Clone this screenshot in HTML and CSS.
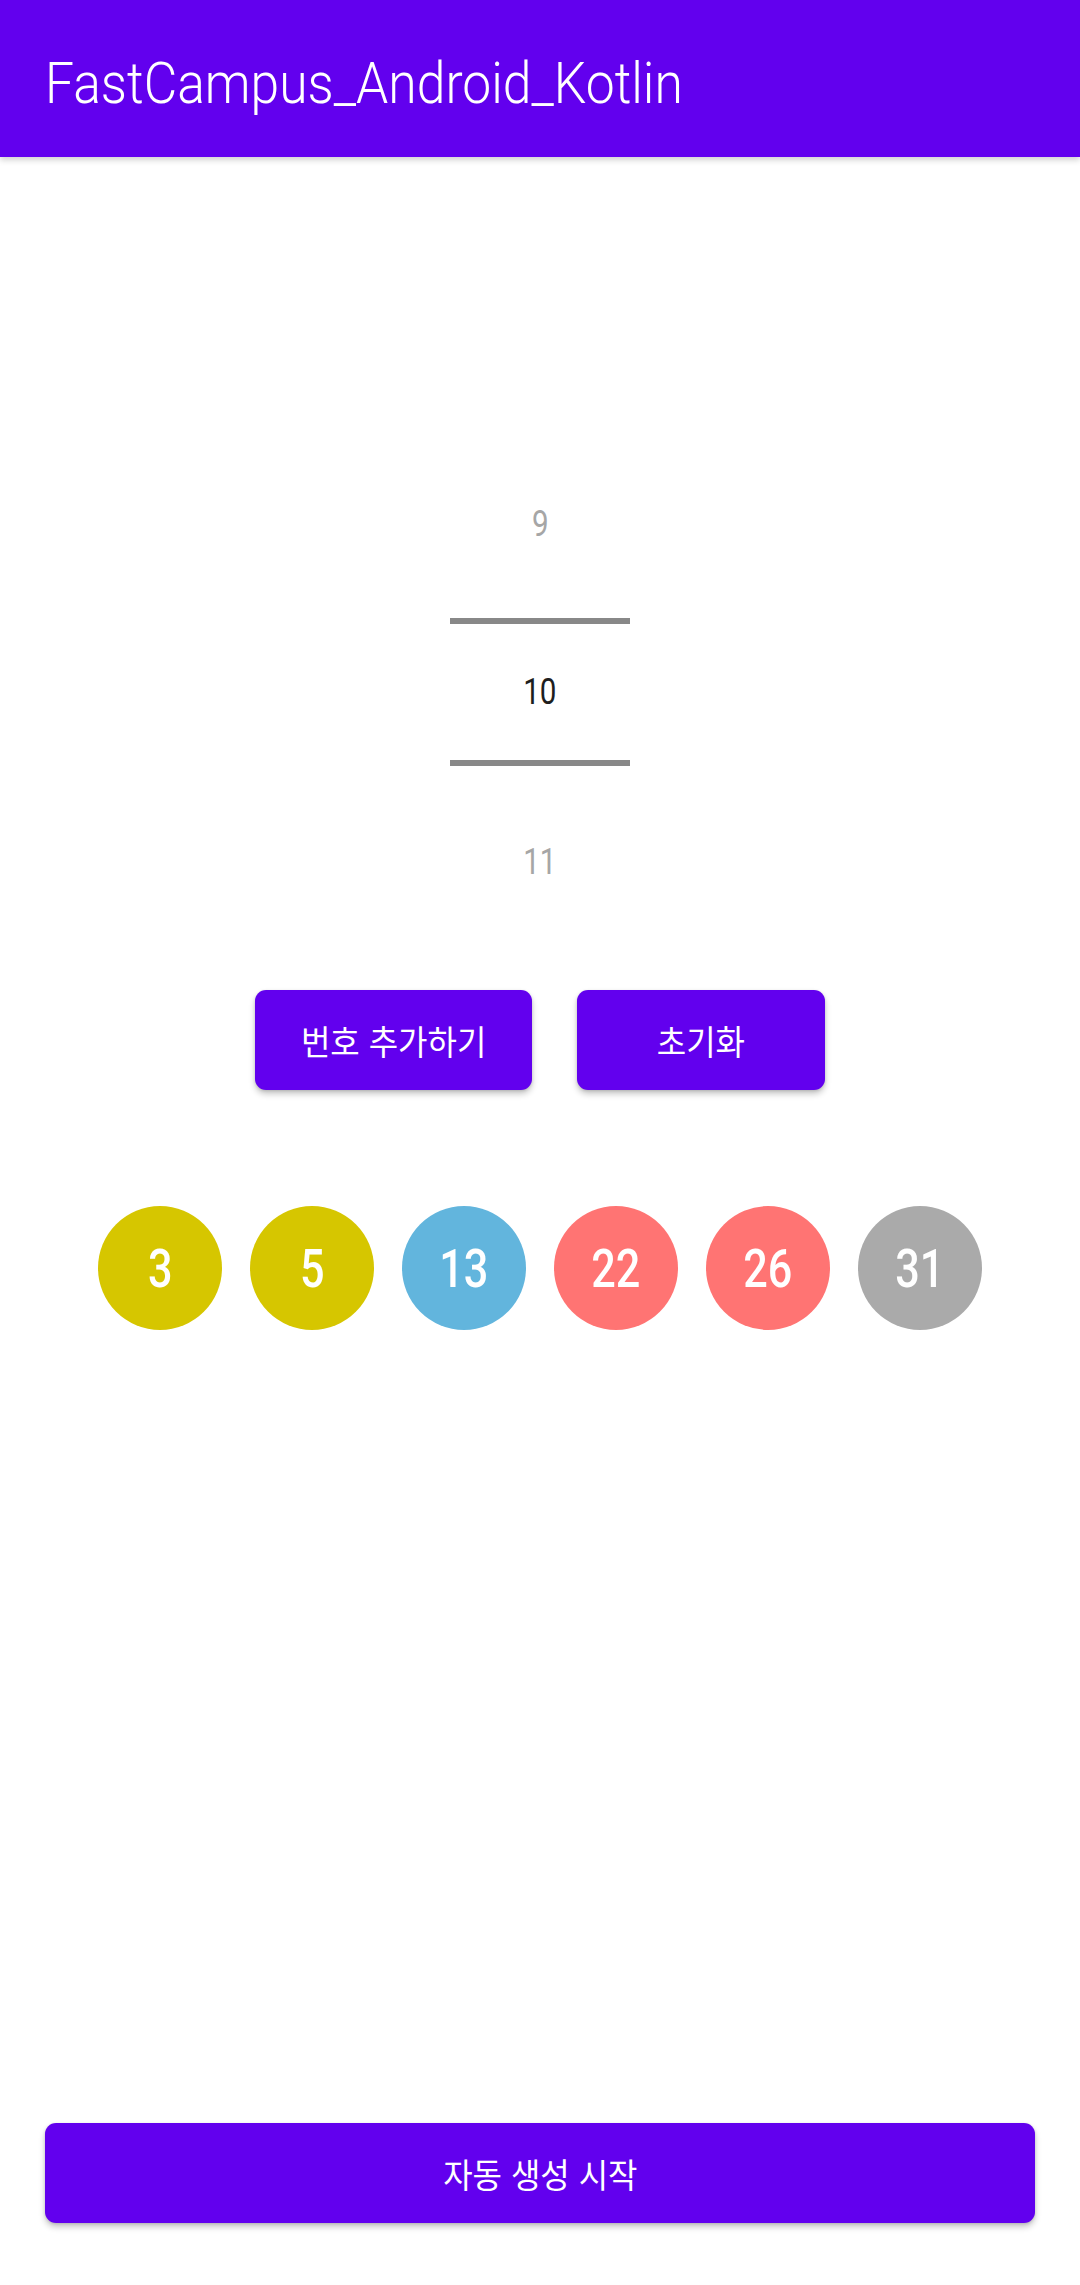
FILE: index.html
```html
<!DOCTYPE html>
<html lang="ko">
<head>
<meta charset="utf-8">
<title>FastCampus_Android_Kotlin</title>
<link rel="stylesheet" href="styles.css">
</head>
<body>
<div class="page">
  <header class="appbar">
    <h1 class="title"><span class="title-text">FastCampus_Android_Kotlin</span></h1>
  </header>
  <main class="content">
    <div class="picker">
      <div class="pick pick-prev"><span class="num">9</span></div>
      <div class="divider"></div>
      <div class="pick pick-current"><span class="num">10</span></div>
      <div class="divider"></div>
      <div class="pick pick-next"><span class="num">11</span></div>
    </div>
    <div class="actions">
      <button class="btn btn-add"><span class="label">번호 추가하기</span></button>
      <button class="btn btn-clear"><span class="label">초기화</span></button>
    </div>
    <div class="balls">
      <div class="ball yellow"><span class="num">3</span></div>
      <div class="ball yellow"><span class="num">5</span></div>
      <div class="ball blue"><span class="num">13</span></div>
      <div class="ball red"><span class="num">22</span></div>
      <div class="ball red"><span class="num">26</span></div>
      <div class="ball gray"><span class="num">31</span></div>
    </div>
    <button class="btn btn-run"><span class="label">자동 생성 시작</span></button>
  </main>
</div>
</body>
</html>
```
FILE: styles.css
```css
html, body {
  margin: 0;
  padding: 0;
  background: #ffffff;
}
.page {
  width: 1080px;
  height: 2285px;
  display: flex;
  flex-direction: column;
  font-family: "Roboto", "Noto Sans CJK KR", sans-serif;
}
.appbar {
  height: 157px;
  flex: none;
  background: #6200ee;
  display: flex;
  align-items: center;
  padding-left: 45px;
  box-shadow: 0 3px 6px rgba(0,0,0,0.18);
  position: relative;
  z-index: 1;
}
.title {
  margin: 0;
  color: #ffffff;
  font-family: "Roboto", sans-serif;
  font-weight: 300;
  font-size: 58px;
  line-height: 1;
  padding-top: 8px;
}
.title-text {
  display: inline-block;
  transform: scaleX(0.89);
  transform-origin: left center;
}
.content {
  flex: 1;
  display: flex;
  flex-direction: column;
  align-items: center;
  padding-bottom: 62px;
}
.picker {
  width: 180px;
  display: flex;
  flex-direction: column;
  align-items: stretch;
  margin-top: 337px;
}
.pick {
  text-align: center;
  font-family: "Roboto", sans-serif;
  font-size: 37px;
  height: 60px;
  line-height: 60px;
}
.num {
  display: inline-block;
  transform: scaleX(0.8);
}
.pick-prev { color: #a6a6a6; }
.pick-current {
  color: #1e1e1e;
  height: 136px;
  line-height: 136px;
}
.pick-next {
  color: #a6a6a6;
  margin-top: 66px;
}
.divider {
  height: 6px;
  background: #888888;
}
.picker .pick-prev + .divider { margin-top: 64px; }
.actions {
  display: flex;
  gap: 45px;
  margin-top: 98px;
}
.btn {
  border: none;
  background: #6200ee;
  color: #ffffff;
  border-radius: 11px;
  height: 100px;
  padding: 0;
  display: flex;
  align-items: center;
  justify-content: center;
  box-shadow: 0 4px 6px rgba(0,0,0,0.22), 0 1px 3px rgba(0,0,0,0.12);
  font-family: "Noto Sans CJK KR", sans-serif;
  font-size: 34px;
  font-weight: 400;
}
.label {
  display: inline-block;
  transform: scaleX(0.94);
}
.btn-add { width: 277px; }
.btn-clear { width: 248px; }
.balls {
  display: flex;
  gap: 28px;
  margin-top: 116px;
}
.ball {
  width: 124px;
  height: 124px;
  border-radius: 50%;
  display: flex;
  align-items: center;
  justify-content: center;
  color: #ffffff;
  font-family: "Roboto", sans-serif;
  font-weight: 500;
  font-size: 54px;
}
.ball .num {
  transform: scaleX(0.8);
}
.yellow { background: #d6c600; }
.blue { background: #62b5dd; }
.red { background: #ff7473; }
.gray { background: #aaaaaa; }
.btn-run {
  margin-top: auto;
  width: 990px;
}
```
